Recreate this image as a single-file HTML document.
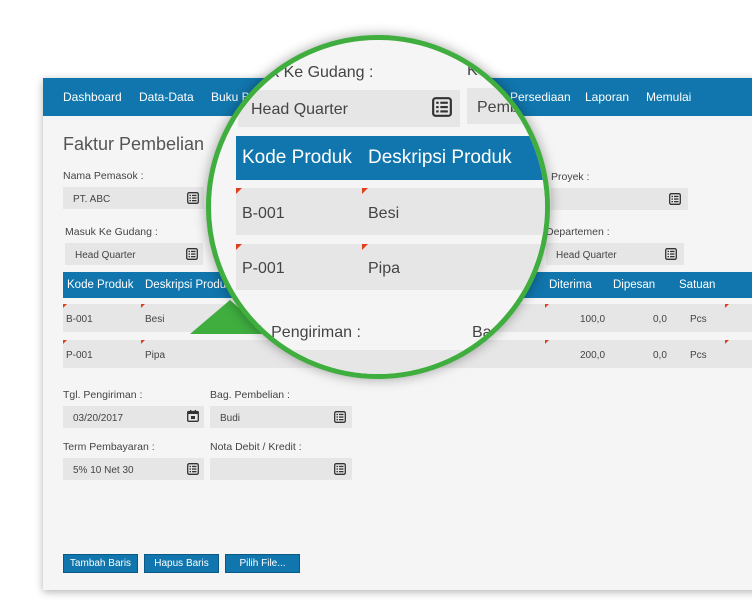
<!DOCTYPE html>
<html><head><meta charset="utf-8"><style>
*{margin:0;padding:0;box-sizing:border-box}
body{width:752px;height:614px;background:#fff;font-family:"Liberation Sans",sans-serif;position:relative;overflow:hidden;color:#444}
.a{position:absolute}
.win{left:43px;top:78px;width:720px;height:512px;background:#f5f5f5;box-shadow:0 2px 8px rgba(0,0,0,.3)}
.nav{left:43px;top:78px;width:709px;height:38px;background:#1176ad}
.nav span{position:absolute;top:12px;color:#fff;font-size:12px}
.lbl{font-size:10.5px;color:#444}
.fld{background:#e6e6e6;font-size:10px;color:#444;padding-left:10px;line-height:25px;height:22px}
.ic{position:absolute;width:12px;height:12px}
.th{left:63px;top:272px;width:689px;height:26px;background:#1176ad}
.th span{position:absolute;top:7px;color:#fff;font-size:11.5px}
.row{left:63px;width:689px;height:28px;background:#e6e6e6;font-size:10px}
.row span{position:absolute;top:10px}
.tri{position:absolute;width:0;height:0;border-top:4px solid #e0401c;border-right:4px solid transparent}
.btn{top:554px;height:19px;background:#1176ad;color:#fff;font-size:10px;text-align:center;line-height:18px;border:1px solid #0b5a86}
.circ{left:206px;top:35px;width:344px;height:344px;border-radius:50%;border:5px solid #3fae3f;background:#f5f5f5;overflow:hidden;box-shadow:0 0 12px rgba(0,0,0,.35)}
.circ .in{position:absolute;left:-211px;top:-40px;width:800px;height:500px}
.big{font-size:16px;color:#444}
</style></head><body>
<svg width="0" height="0" style="position:absolute"><defs><symbol id="L" viewBox="0 0 12 12"><rect x="0.7" y="0.7" width="10.6" height="10.6" rx="1.5" fill="none" stroke="#333" stroke-width="1.3"/><rect x="2.5" y="2.8" width="1.5" height="1.3" fill="#333"/><rect x="5" y="2.8" width="4.5" height="1.3" fill="#333"/><rect x="2.5" y="5.4" width="1.5" height="1.3" fill="#333"/><rect x="5" y="5.4" width="4.5" height="1.3" fill="#333"/><rect x="2.5" y="8" width="1.5" height="1.3" fill="#333"/><rect x="5" y="8" width="4.5" height="1.3" fill="#333"/></symbol>
<symbol id="C" viewBox="0 0 12 12"><rect x="0.7" y="1.5" width="10.6" height="9.8" rx="1" fill="none" stroke="#333" stroke-width="1.3"/><rect x="0.7" y="1.5" width="10.6" height="2.5" fill="#333"/><rect x="3" y="0" width="1.3" height="2.5" fill="#333"/><rect x="7.7" y="0" width="1.3" height="2.5" fill="#333"/><rect x="4" y="6" width="4" height="3" fill="#333"/></symbol></defs></svg>
<div class="a win"></div>
<div class="a nav">
<span style="left:20px">Dashboard</span><span style="left:96px">Data-Data</span><span style="left:168px">Buku Besar</span>
<span style="left:467px">Persediaan</span><span style="left:542px">Laporan</span><span style="left:603px">Memulai</span>
</div>
<div class="a" style="left:63px;top:134px;font-size:18px;color:#555">Faktur Pembelian</div>
<div class="a lbl" style="left:63px;top:170px">Nama Pemasok :</div>
<div class="a fld" style="left:63px;top:187px;width:141px">PT. ABC<svg class="ic" style="left:124px;top:5px"><use href="#L"/></svg></div>
<div class="a lbl" style="left:65px;top:226px">Masuk Ke Gudang :</div>
<div class="a fld" style="left:65px;top:243px;width:138px">Head Quarter<svg class="ic" style="left:121px;top:5px"><use href="#L"/></svg></div>
<div class="a lbl" style="left:551px;top:171px">Proyek :</div>
<div class="a fld" style="left:551px;top:188px;width:137px"><svg class="ic" style="left:118px;top:5px"><use href="#L"/></svg></div>
<div class="a lbl" style="left:546px;top:226px">Departemen :</div>
<div class="a fld" style="left:546px;top:243px;width:138px">Head Quarter<svg class="ic" style="left:119px;top:5px"><use href="#L"/></svg></div>
<div class="a th"><span style="left:4px">Kode Produk</span><span style="left:82px">Deskripsi Produk</span><span style="left:486px">Diterima</span><span style="left:550px">Dipesan</span><span style="left:616px">Satuan</span></div>
<div class="a row" style="top:304px"><span style="left:3px">B-001</span><span style="left:82px">Besi</span><span style="left:517px">100,0</span><span style="left:590px">0,0</span><span style="left:627px">Pcs</span><i class="tri" style="left:0;top:0"></i><i class="tri" style="left:78px;top:0"></i><i class="tri" style="left:482px;top:0"></i><i class="tri" style="left:662px;top:0"></i></div>
<div class="a row" style="top:340px"><span style="left:3px">P-001</span><span style="left:82px">Pipa</span><span style="left:517px">200,0</span><span style="left:590px">0,0</span><span style="left:627px">Pcs</span><i class="tri" style="left:0;top:0"></i><i class="tri" style="left:78px;top:0"></i><i class="tri" style="left:482px;top:0"></i><i class="tri" style="left:662px;top:0"></i></div>
<div class="a lbl" style="left:63px;top:389px">Tgl. Pengiriman :</div>
<div class="a fld" style="left:63px;top:406px;width:141px">03/20/2017<svg class="ic" style="left:124px;top:4px"><use href="#C"/></svg></div>
<div class="a lbl" style="left:210px;top:389px">Bag. Pembelian :</div>
<div class="a fld" style="left:210px;top:406px;width:142px">Budi<svg class="ic" style="left:124px;top:5px"><use href="#L"/></svg></div>
<div class="a lbl" style="left:63px;top:441px">Term Pembayaran :</div>
<div class="a fld" style="left:63px;top:458px;width:141px">5% 10 Net 30<svg class="ic" style="left:124px;top:5px"><use href="#L"/></svg></div>
<div class="a lbl" style="left:210px;top:441px">Nota Debit / Kredit :</div>
<div class="a fld" style="left:210px;top:458px;width:142px"><svg class="ic" style="left:124px;top:5px"><use href="#L"/></svg></div>
<div class="a btn" style="left:63px;width:75px">Tambah Baris</div>
<div class="a btn" style="left:144px;width:75px">Hapus Baris</div>
<div class="a btn" style="left:225px;width:75px">Pilih File...</div>
<svg class="a" style="left:0;top:0" width="752" height="614"><polygon points="190,334 230,300 268,334" fill="#3fae3f"/></svg>
<div class="a circ"><div class="in">
<div class="a big" style="left:232px;top:64px">Masuk Ke Gudang :</div>
<div class="a big" style="left:467px;top:62px">Ket</div>
<div class="a fld big" style="left:238px;top:90px;width:222px;height:37px;line-height:40px;font-size:16px;padding-left:13px">Head Quarter<svg style="position:absolute;left:194px;top:7px" width="20" height="20"><use href="#L"/></svg></div>
<div class="a fld big" style="left:467px;top:88px;width:120px;height:36px;line-height:40px;font-size:16px">Pembelian</div>
<div class="a" style="left:236px;top:136px;width:320px;height:44px;background:#1176ad;color:#fff;font-size:19px"><span class="a" style="left:6px;top:11px">Kode Produk</span><span class="a" style="left:132px;top:11px">Deskripsi Produk</span></div>
<div class="a" style="left:236px;top:188px;width:320px;height:47px;background:#e6e6e6;font-size:16px"><span class="a" style="left:6px;top:17px">B-001</span><span class="a" style="left:132px;top:17px">Besi</span><i class="tri" style="left:0;top:0;border-top-width:6px;border-right-width:6px"></i><i class="tri" style="left:126px;top:0;border-top-width:6px;border-right-width:6px"></i></div>
<div class="a" style="left:236px;top:244px;width:320px;height:46px;background:#e6e6e6;font-size:16px"><span class="a" style="left:6px;top:16px">P-001</span><span class="a" style="left:132px;top:16px">Pipa</span><i class="tri" style="left:0;top:0;border-top-width:6px;border-right-width:6px"></i><i class="tri" style="left:126px;top:0;border-top-width:6px;border-right-width:6px"></i></div>
<div class="a big" style="left:240px;top:324px">Tgl. Pengiriman :</div>
<div class="a big" style="left:472px;top:324px">Bag.</div>
<div class="a" style="left:230px;top:350px;width:400px;height:40px;background:#e6e6e6"></div>
</div></div>
</body></html>
